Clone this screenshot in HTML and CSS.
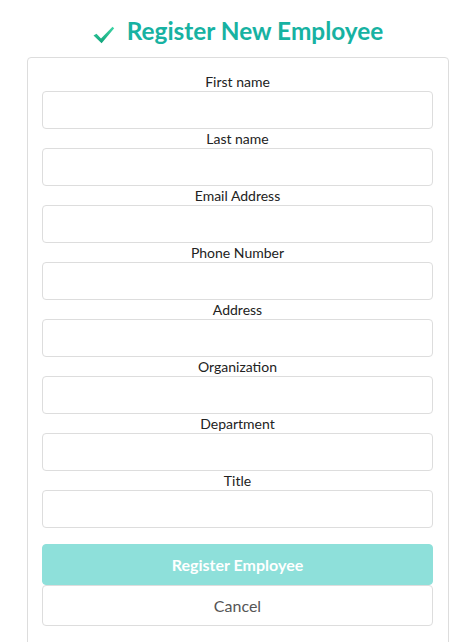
FILE: index.html
```html
<!DOCTYPE html>
<html>
<head>
<meta charset="utf-8">
<link rel="stylesheet" href="styles.css">
</head>
<body>
<div class="page">
  <h1 class="title">
    <svg class="check" width="22" height="18" viewBox="0 0 22 18">
      <defs>
        <linearGradient id="g" x1="0" y1="0" x2="0" y2="1">
          <stop offset="0" stop-color="#3fd6a6"/>
          <stop offset="1" stop-color="#0ea27a"/>
        </linearGradient>
      </defs>
      <path d="M0.5 9.5 L3.5 7.8 L8 12.6 L19.5 0.8 L21.2 2.2 L8.6 17.2 Z" fill="url(#g)"/>
    </svg>
    <span>Register New Employee</span>
  </h1>
  <form class="card">
    <label class="field"><span class="label">First name</span><input class="input" type="text"></label>
    <label class="field"><span class="label">Last name</span><input class="input" type="text"></label>
    <label class="field"><span class="label">Email Address</span><input class="input" type="text"></label>
    <label class="field"><span class="label">Phone Number</span><input class="input" type="text"></label>
    <label class="field"><span class="label">Address</span><input class="input" type="text"></label>
    <label class="field"><span class="label">Organization</span><input class="input" type="text"></label>
    <label class="field"><span class="label">Department</span><input class="input" type="text"></label>
    <label class="field"><span class="label">Title</span><input class="input" type="text"></label>
    <div class="actions">
      <button type="button" class="btn btn-primary">Register Employee</button>
      <button type="button" class="btn btn-cancel">Cancel</button>
    </div>
  </form>
</div>
</body>
</html>
```

FILE: styles.css
```css
* { box-sizing: border-box; }
html, body { margin: 0; padding: 0; background: #fff; }
body { font-family: Lato, "Open Sans", sans-serif; color: #222; }
.page { width: 422px; margin-left: 27px; }
.title {
  margin: 0;
  height: 57px;
  display: flex;
  align-items: center;
  justify-content: center;
  gap: 12px;
  font-size: 24.4px;
  font-weight: 700;
  color: #17b2a2;
  padding-top: 4px;
}
.check { margin-top: 8px; }
.card {
  border: 1px solid #ddd;
  border-radius: 4px;
  padding: 14px 15px 40px 14px;
  display: flex;
  flex-direction: column;
}
.field { display: flex; flex-direction: column; }
.label {
  font-size: 14px;
  line-height: 19px;
  height: 19px;
  text-align: center;
  color: #222;
}
.input {
  height: 38px;
  border: 1px solid #ddd;
  border-radius: 4px;
  margin: 0;
  padding: 6px 12px;
  font: inherit;
  background: #fff;
}
.actions { margin-top: 16px; display: flex; flex-direction: column; }
.btn {
  height: 41px;
  border-radius: 4px;
  font-family: Lato, sans-serif;
  font-size: 16px;
  margin: 0;
}
.btn-primary {
  background: #8ee0da;
  border: 1px solid #8ee0da;
  color: #fff;
  font-weight: 700;
}
.btn-cancel {
  background: #fff;
  border: 1px solid #ddd;
  color: #555;
}
```
